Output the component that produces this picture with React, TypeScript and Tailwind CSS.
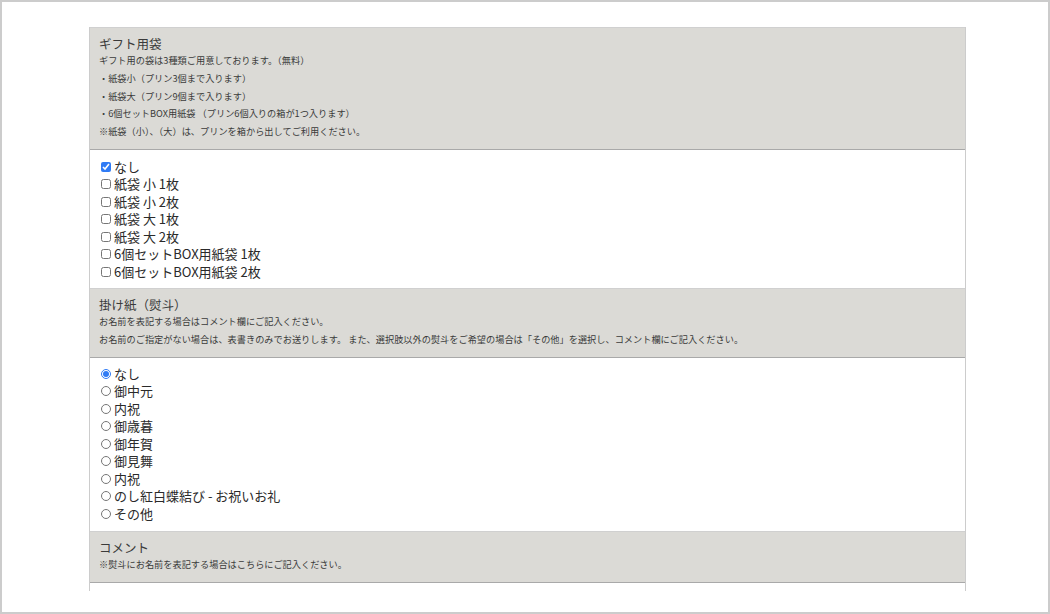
import { useState } from "react";

const bagNotes = [
  "ギフト用の袋は3種類ご用意しております。（無料）",
  "・紙袋小（プリン3個まで入ります）",
  "・紙袋大（プリン9個まで入ります）",
  "・6個セットBOX用紙袋 （プリン6個入りの箱が1つ入ります）",
  "※紙袋（小）、（大）は、プリンを箱から出してご利用ください。",
];

const bagOptions = [
  "なし",
  "紙袋 小 1枚",
  "紙袋 小 2枚",
  "紙袋 大 1枚",
  "紙袋 大 2枚",
  "6個セットBOX用紙袋 1枚",
  "6個セットBOX用紙袋 2枚",
];

const noshiNotes = [
  "お名前を表記する場合はコメント欄にご記入ください。",
  "お名前のご指定がない場合は、表書きのみでお送りします。 また、選択肢以外の熨斗をご希望の場合は「その他」を選択し、コメント欄にご記入ください。",
];

const noshiOptions = [
  "なし",
  "御中元",
  "内祝",
  "御歳暮",
  "御年賀",
  "御見舞",
  "内祝",
  "のし紅白蝶結び - お祝いお礼",
  "その他",
];

function SectionHead({ title, notes }: { title: string; notes: string[] }) {
  return (
    <div className="border-t border-b border-t-[#d0d0d0] border-b-[#a9a9a9] bg-[#dbdad6] px-[9px] pt-[7px] pb-[8px] text-[#3a3a3a]">
      <div className="text-[12.5px] leading-[17px]">{title}</div>
      {notes.map((n, i) => (
        <div key={i} className="text-[9.2px] leading-[17.75px]">
          {n}
        </div>
      ))}
    </div>
  );
}

export default function App() {
  const [bags, setBags] = useState<number[]>([0]);
  const [noshi, setNoshi] = useState(0);

  return (
    <div
      className="h-[614px] w-[1050px] overflow-hidden border-2 border-[#cccccc] bg-white pt-[25px] pl-[87px]"
      style={{ fontFamily: '"Noto Sans CJK JP", "Noto Sans", sans-serif' }}
    >
      <div className="h-[564px] w-[877px] overflow-hidden border-x border-[#cccccc]">
        <SectionHead title="ギフト用袋" notes={bagNotes} />
        <div className="px-[11px] pt-[8px] pb-[8px]">
          {bagOptions.map((label, i) => (
            <label key={i} className="flex items-center text-[13px] leading-[17.5px] text-[#2a2a2a]">
              <input
                type="checkbox"
                checked={bags.includes(i)}
                onChange={() =>
                  setBags((b) => (b.includes(i) ? b.filter((x) => x !== i) : [...b, i]))
                }
                className="m-0 mr-[3px] h-[10px] w-[10px] accent-[#2f7bf5]"
              />
              {label}
            </label>
          ))}
        </div>
        <SectionHead title="掛け紙（熨斗）" notes={noshiNotes} />
        <div className="px-[11px] pt-[7px] pb-[9px]">
          {noshiOptions.map((label, i) => (
            <label key={i} className="flex items-center text-[13px] leading-[17.5px] text-[#2a2a2a]">
              <input
                type="radio"
                name="noshi"
                checked={noshi === i}
                onChange={() => setNoshi(i)}
                className="m-0 mr-[3px] h-[10px] w-[10px] accent-[#2f7bf5]"
              />
              {label}
            </label>
          ))}
        </div>
        <SectionHead title="コメント" notes={["※熨斗にお名前を表記する場合はこちらにご記入ください。"]} />
      </div>
    </div>
  );
}
